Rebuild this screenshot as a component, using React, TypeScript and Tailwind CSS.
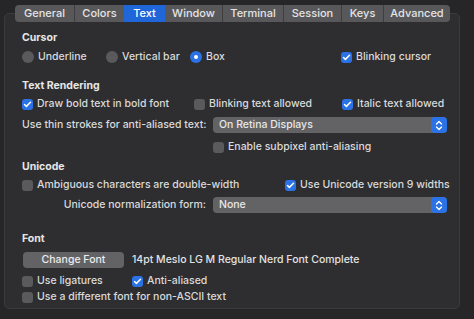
import { Check } from 'lucide-react';

const tabs = ['General', 'Colors', 'Text', 'Window', 'Terminal', 'Session', 'Keys', 'Advanced'];
const tabWidths = ['w-[59px]', 'w-[50px]', 'w-[41px]', 'w-[57px]', 'w-[61px]', 'w-[58px]', 'w-[42px]', 'w-[67px]'];

function Checkbox({ checked, label }: { checked?: boolean; label: string }) {
  return (
    <div className="flex items-center gap-[4px]">
      <div
        className={`w-[11px] h-[11px] rounded-[3px] flex items-center justify-center ${
          checked ? 'bg-[#2a72e5]' : 'bg-[#5a5a5d]'
        }`}
      >
        {checked && <Check className="w-[9px] h-[9px] text-white" strokeWidth={4} />}
      </div>
      <span>{label}</span>
    </div>
  );
}

function Radio({ checked, label }: { checked?: boolean; label: string }) {
  return (
    <div className="flex items-center gap-[4px]">
      <div
        className={`w-[12px] h-[12px] rounded-full flex items-center justify-center ${
          checked ? 'bg-[#2a72e5]' : 'bg-[#5a5a5d]'
        }`}
      >
        {checked && <div className="w-[4px] h-[4px] rounded-full bg-white" />}
      </div>
      <span>{label}</span>
    </div>
  );
}

function Popup({ value }: { value: string }) {
  return (
    <div className="w-[234px] h-[16px] rounded-[4px] bg-[#636366] flex items-center justify-between pl-[6px]">
      <span className="text-[#e8e8e8]">{value}</span>
      <div className="w-[16px] h-[16px] rounded-[4px] bg-[#2a72e5] flex items-center justify-center">
        <svg width="8" height="11" viewBox="0 0 8 11" fill="none" stroke="white" strokeWidth="1.4" strokeLinecap="round" strokeLinejoin="round">
          <path d="M1.5 4L4 1.5L6.5 4" />
          <path d="M1.5 7L4 9.5L6.5 7" />
        </svg>
      </div>
    </div>
  );
}

function Heading({ children, className }: { children: string; className: string }) {
  return <div className={`h-[16px] flex items-center font-bold text-[#e6e6e6] ${className}`}>{children}</div>;
}

export default function App() {
  return (
    <div
      className="w-[474px] h-[319px] bg-[#262629] pt-[5px] pl-[4px] text-[10.5px] font-medium text-[#dadada] overflow-hidden"
      style={{ fontFamily: 'Inter, "Liberation Sans", sans-serif' }}
    >
      <div className="relative w-[456px] h-[296px] mt-[8px] rounded-[5px] border border-[#3b3b3e] bg-[#2e2e31] pl-[17px] pt-[16px]">
        <div className="absolute left-[10px] -top-[9px] h-[17px] flex rounded-[4px] bg-[#58585b] overflow-hidden text-[11px]">
          {tabs.map((tab, i) => (
            <div
              key={tab}
              className={`${tabWidths[i]} h-full flex items-center justify-center text-[#e4e4e4] ${
                tab === 'Text' ? 'bg-[#1f66d9] text-white' : ''
              } ${i > 0 && tab !== 'Text' && tabs[i - 1] !== 'Text' ? 'border-l border-[#3e3e41]' : ''}`}
            >
              {tab}
            </div>
          ))}
        </div>

        <Heading className="">Cursor</Heading>
        <div className="h-[16px] mt-[3px] flex items-center">
          <div className="w-[84px]"><Radio label="Underline" /></div>
          <div className="w-[84px]"><Radio label="Vertical bar" /></div>
          <div className="w-[151px]"><Radio checked label="Box" /></div>
          <Checkbox checked label="Blinking cursor" />
        </div>

        <Heading className="mt-[13px]">Text Rendering</Heading>
        <div className="h-[16px] mt-[2px] flex items-center">
          <div className="w-[172px]"><Checkbox checked label="Draw bold text in bold font" /></div>
          <div className="w-[148px]"><Checkbox label="Blinking text allowed" /></div>
          <Checkbox checked label="Italic text allowed" />
        </div>
        <div className="h-[16px] mt-[5px] flex items-center">
          <div className="w-[191px]">Use thin strokes for anti-aliased text:</div>
          <Popup value="On Retina Displays" />
        </div>
        <div className="h-[16px] mt-[6px] flex items-center pl-[191px]">
          <Checkbox label="Enable subpixel anti-aliasing" />
        </div>

        <Heading className="mt-[4px]">Unicode</Heading>
        <div className="h-[16px] mt-[2px] flex items-center">
          <div className="w-[263px]"><Checkbox label="Ambiguous characters are double-width" /></div>
          <Checkbox checked label="Use Unicode version 9 widths" />
        </div>
        <div className="h-[16px] mt-[4px] flex items-center">
          <div className="w-[184px] text-right">Unicode normalization form:</div>
          <div className="ml-[7px]"><Popup value="None" /></div>
        </div>

        <Heading className="mt-[18px]">Font</Heading>
        <div className="h-[16px] mt-[5px] flex items-center">
          <div className="w-[101px] h-[16px] ml-[1px] rounded-[4px] bg-[#636366] flex items-center justify-center text-[#ececec]">
            Change Font
          </div>
          <span className="ml-[8px] text-[#e2e2e2]">14pt Meslo LG M Regular Nerd Font Complete</span>
        </div>
        <div className="h-[16px] mt-[5px] flex items-center">
          <div className="w-[110px]"><Checkbox label="Use ligatures" /></div>
          <Checkbox checked label="Anti-aliased" />
        </div>
        <div className="h-[16px] flex items-center">
          <Checkbox label="Use a different font for non-ASCII text" />
        </div>
      </div>
    </div>
  );
}
